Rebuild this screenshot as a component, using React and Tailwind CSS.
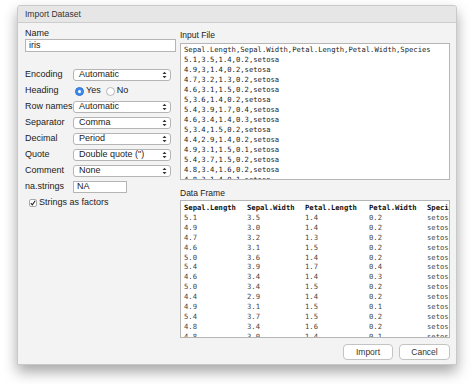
import React from "react";

const csv = [
  "Sepal.Length,Sepal.Width,Petal.Length,Petal.Width,Species",
  "5.1,3.5,1.4,0.2,setosa",
  "4.9,3,1.4,0.2,setosa",
  "4.7,3.2,1.3,0.2,setosa",
  "4.6,3.1,1.5,0.2,setosa",
  "5,3.6,1.4,0.2,setosa",
  "5.4,3.9,1.7,0.4,setosa",
  "4.6,3.4,1.4,0.3,setosa",
  "5,3.4,1.5,0.2,setosa",
  "4.4,2.9,1.4,0.2,setosa",
  "4.9,3.1,1.5,0.1,setosa",
  "5.4,3.7,1.5,0.2,setosa",
  "4.8,3.4,1.6,0.2,setosa",
  "4.8,3,1.4,0.1,setosa",
];

const rows = [
  ["5.1", "3.5", "1.4", "0.2"],
  ["4.9", "3.0", "1.4", "0.2"],
  ["4.7", "3.2", "1.3", "0.2"],
  ["4.6", "3.1", "1.5", "0.2"],
  ["5.0", "3.6", "1.4", "0.2"],
  ["5.4", "3.9", "1.7", "0.4"],
  ["4.6", "3.4", "1.4", "0.3"],
  ["5.0", "3.4", "1.5", "0.2"],
  ["4.4", "2.9", "1.4", "0.2"],
  ["4.9", "3.1", "1.5", "0.1"],
  ["5.4", "3.7", "1.5", "0.2"],
  ["4.8", "3.4", "1.6", "0.2"],
  ["4.8", "3.0", "1.4", "0.1"],
];

const mono = "font-['DejaVu_Sans_Mono',monospace] text-[7.2px]";

function Select({ value }) {
  return (
    <div className="flex items-center justify-between w-[98px] h-[12px] bg-white border border-[#b5b5b5] rounded-[3px] pl-[5px] pr-[3px] text-[#222]">
      <span>{value}</span>
      <svg width="5" height="8" viewBox="0 0 5 8">
        <path d="M0.5 3 L2.5 0.8 L4.5 3 Z M0.5 5 L2.5 7.2 L4.5 5 Z" fill="#333" />
      </svg>
    </div>
  );
}

function Row({ label, children }) {
  return (
    <div className="flex items-center h-[16px]">
      <div className="w-[48px] shrink-0">{label}</div>
      {children}
    </div>
  );
}

export default function App() {
  return (
    <div className="w-[474px] h-[384px] bg-white pt-[5px] pl-[17px] font-['Liberation_Sans',Arial,sans-serif] text-[#222]">
      <div className="w-[440px] h-[360px] bg-[#f3f3f3] border border-[#c9c9c9] rounded-t-[3px] shadow-[0_7px_14px_rgba(0,0,0,0.35)] flex flex-col">
        <div className="h-[17px] bg-[#e6e6e6] border-b border-[#cdcdcd] flex items-center pl-[7px] text-[8.5px] text-[#333] rounded-t-[3px]">
          Import Dataset
        </div>
        <div className="flex flex-1 pl-[7px] pr-[6px] pt-[5px] pb-[3px] gap-[4px] text-[9px]">
          <div className="w-[151px] shrink-0 flex flex-col">
            <div className="h-[11px] leading-[11px]">Name</div>
            <div className="h-[13px] bg-white border border-[#b5b5b5] flex items-center pl-[3px] text-[9px]">iris</div>
            <div className="h-[15px]" />
            <div className="flex flex-col">
              <Row label="Encoding"><Select value="Automatic" /></Row>
              <Row label="Heading">
                <div className="flex items-center gap-[2px] pl-[2px]">
                  <div className="w-[9px] h-[9px] rounded-full bg-[#3b8cf0] border border-[#2f74d0] flex items-center justify-center">
                    <div className="w-[3px] h-[3px] rounded-full bg-white" />
                  </div>
                  <span className="mr-[3px]">Yes</span>
                  <div className="w-[9px] h-[9px] rounded-full bg-white border border-[#b5b5b5]" />
                  <span>No</span>
                </div>
              </Row>
              <Row label="Row names"><Select value="Automatic" /></Row>
              <Row label="Separator"><Select value="Comma" /></Row>
              <Row label="Decimal"><Select value="Period" /></Row>
              <Row label="Quote"><Select value={'Double quote (")'} /></Row>
              <Row label="Comment"><Select value="None" /></Row>
              <Row label="na.strings">
                <div className="w-[54px] h-[12px] bg-white border border-[#b5b5b5] flex items-center pl-[3px]">NA</div>
              </Row>
              <div className="flex items-center h-[16px] pl-[4px] gap-[2px]">
                <div className="w-[8px] h-[8px] bg-white border border-[#a8a8a8] rounded-[2px] flex items-center justify-center">
                  <svg width="6" height="6" viewBox="0 0 6 6">
                    <path d="M0.8 3.2 L2.3 4.8 L5.2 0.8" stroke="#222" strokeWidth="1.1" fill="none" />
                  </svg>
                </div>
                <span>Strings as factors</span>
              </div>
            </div>
          </div>
          <div className="flex-1 min-w-0 flex flex-col">
            <div className="h-[12px] leading-[12px] text-[8.5px] pt-[1px]">Input File</div>
            <div className={`h-[137px] mt-[3px] bg-white border border-[#b5b5b5] overflow-hidden pl-[3px] pt-[1px] ${mono} leading-[10px] text-[#222]`}>
              {csv.map((l, i) => (
                <div key={i} className="whitespace-pre">{l}</div>
              ))}
            </div>
            <div className="h-[12px] leading-[12px] text-[8.5px] mt-[7px]">Data Frame</div>
            <div className={`h-[138px] mt-[1px] bg-white border border-[#b5b5b5] overflow-hidden pl-[3px] pt-[2px] ${mono} leading-[9.9px]`}>
              <div className="flex whitespace-pre font-bold text-[#111]">
                <span className="w-[63px] shrink-0">Sepal.Length</span>
                <span className="w-[58px] shrink-0">Sepal.Width</span>
                <span className="w-[64px] shrink-0">Petal.Length</span>
                <span className="w-[58px] shrink-0">Petal.Width</span>
                <span className="shrink-0">Species</span>
              </div>
              {rows.map((r, i) => (
                <div key={i} className="flex whitespace-pre text-[#444]">
                  <span className="w-[63px] shrink-0">{r[0]}</span>
                  <span className="w-[58px] shrink-0">{r[1]}</span>
                  <span className="w-[64px] shrink-0">{r[2]}</span>
                  <span className="w-[58px] shrink-0">{r[3]}</span>
                  <span className="shrink-0">setosa</span>
                </div>
              ))}
            </div>
            <div className="flex justify-end gap-[6px] mt-[6px]">
              <button className="w-[50px] h-[16px] bg-white border border-[#c3c3c3] rounded-[4px] text-[8.5px] text-[#333]">Import</button>
              <button className="w-[51px] h-[16px] bg-white border border-[#c3c3c3] rounded-[4px] text-[8.5px] text-[#333]">Cancel</button>
            </div>
          </div>
        </div>
      </div>
    </div>
  );
}
